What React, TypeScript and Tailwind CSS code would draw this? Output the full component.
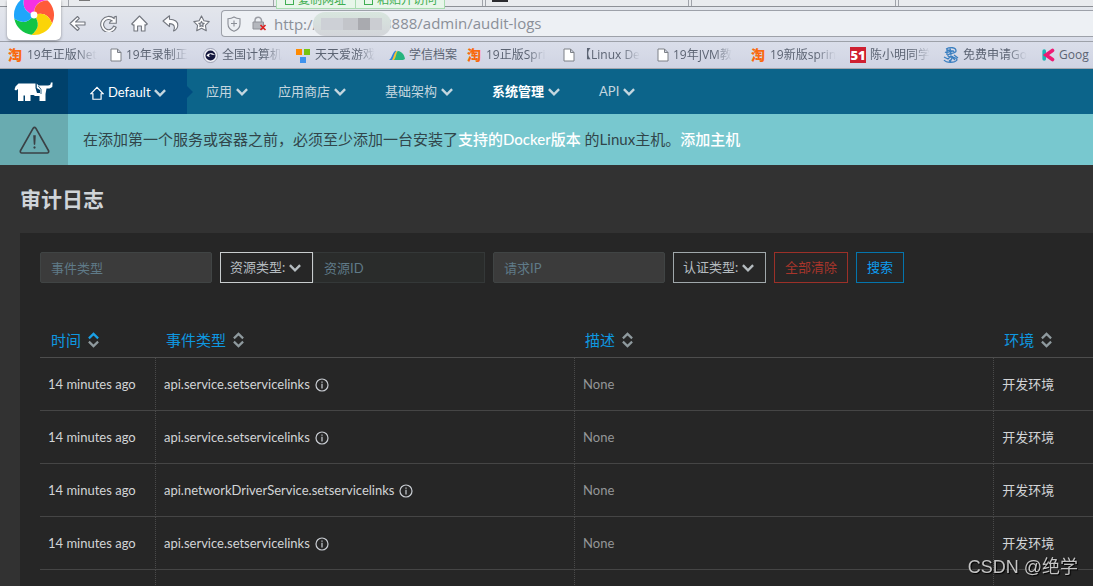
import React from "react";

const ui = "font-['Lato','Noto_Sans_CJK_SC',sans-serif]";
const chrome = "font-['Open_Sans','Noto_Sans_CJK_SC',sans-serif]";

function Chevron({ className = "" }: { className?: string }) {
  return (
    <svg className={"h-[8px] w-[12px] shrink-0 " + className} viewBox="0 0 12 8" fill="none" stroke="currentColor" strokeWidth="2.4" aria-hidden="true">
      <path d="M0.9 1.2 L6 6.3 L11.1 1.2" />
    </svg>
  );
}

function SortIcon({ active = false }: { active?: boolean }) {
  return (
    <svg className="h-[16px] w-[11px] shrink-0" viewBox="0 0 11 16" fill="none" strokeWidth="2.2" aria-hidden="true">
      <path d="M0.9 6.4 L5.5 1.9 L10.1 6.4" stroke={active ? "#1aa0e6" : "#8f9a9e"} />
      <path d="M0.9 9.6 L5.5 14.1 L10.1 9.6" stroke="#8f9a9e" />
    </svg>
  );
}

function InfoIcon() {
  return (
    <svg className="h-[14px] w-[14px] shrink-0" viewBox="0 0 14 14" fill="none" stroke="#c9cdd3" aria-hidden="true">
      <circle cx="7" cy="7" r="6" strokeWidth="1.2" />
      <path d="M7 5.8 V10.6 M7 3.4 V4.8" strokeWidth="1.2" />
    </svg>
  );
}

function Pinwheel() {
  const colors = ["#f531e2", "#ff5b3a", "#fbd408", "#12c445", "#1fa5fb"];
  return (
    <svg className="h-[42px] w-[42px]" viewBox="-21 -21 42 42" aria-hidden="true">
      {colors.map((c, i) => (
        <path key={c} fill={c} transform={`rotate(${i * 72 + 8})`} d="M0 0 Q-14 -2 -12 -16 A20 20 0 0 1 11.5 -16.4 Q-2.4 -13.9 0 0 Z" />
      ))}
      <circle r="3.4" fill="#fff" />
    </svg>
  );
}

const toolPath = { fill: "#fdfdfe", stroke: "#73777f", strokeWidth: 1.1, strokeLinejoin: "round" as const };

const tools = [
  { label: "Back", d: "M1 8.5 L8.5 1.5 L10.3 3.3 L6.6 7 H16 V10 H6.6 L10.3 13.7 L8.5 15.5 Z" },
  { label: "Reload", d: "M14.2 2 L16.3 1.2 V8.2 H9.4 L10.6 6 L12.2 5.9 A5.1 5.1 0 1 0 13.6 11 L16.2 12.2 A8 8 0 1 1 14.2 3.6 Z" },
  { label: "Home", d: "M8.5 1 L16.3 9 L14.6 10.2 L14 9.7 V16 H10.4 V11 H6.6 V16 H3 V9.7 L2.4 10.2 L0.7 9 Z" },
  { label: "Undo", d: "M1 6 L7.5 0.8 V4.2 C13 4.2 16 7 15.8 10.5 C15.6 13 14 15 11.6 16 C13.4 12.6 12.6 8.6 7.5 8.6 V11.6 Z" },
  { label: "Favourite", d: "M8.5 0.9 L10.9 5.8 L16.2 6.6 L12.4 10.4 L13.3 15.8 L8.5 13.3 L3.7 15.8 L4.6 10.4 L0.8 6.6 L6.1 5.8 Z M8.5 6.4 L7.7 8.1 L5.8 8.3 L7.2 9.7 L6.9 11.6 L8.5 10.7 L10.1 11.6 L9.8 9.7 L11.2 8.3 L9.3 8.1 Z" },
];

function Taobao() {
  return <span className="w-[15px] shrink-0 text-[14px] leading-[16px] font-black text-[#f9690e]">淘</span>;
}

function PageIcon() {
  return (
    <svg className="h-[14px] w-[12px] shrink-0" viewBox="0 0 12 14" fill="#fff" stroke="#7c8087" aria-hidden="true">
      <path d="M1 1 H7.5 L11 4.5 V13 H1 Z M7.5 1 V4.5 H11" />
    </svg>
  );
}

function EyeIcon() {
  return (
    <svg className="h-[15px] w-[15px] shrink-0" viewBox="0 0 15 15" fill="none" aria-hidden="true">
      <circle cx="7.5" cy="7.5" r="7" fill="#f2f3f8" stroke="#8b90a5" strokeWidth=".8" />
      <circle cx="7.5" cy="7.5" r="5" fill="#14173d" />
      <path d="M3.5 7.6 C5.5 4.6 10 4.6 12 7.2 C9 6.4 8.3 7 8.2 8.5 C7 9.6 4.8 9 3.5 7.6" fill="#fff" />
      <circle cx="7.6" cy="7.6" r="1.5" fill="#14173d" />
    </svg>
  );
}

function BlocksIcon() {
  return (
    <svg className="h-[15px] w-[15px] shrink-0" viewBox="0 0 15 15" aria-hidden="true">
      <path d="M0 1 H6 V7 H0 Z" fill="#ff8a00" />
      <path d="M8 1 H14 V7 H8 Z" fill="#77c410" />
      <path d="M4 9 H10 V15 H4 Z" fill="#3f93ee" />
    </svg>
  );
}

function ChsiIcon() {
  return (
    <svg className="h-[14px] w-[16px] shrink-0" viewBox="0 0 16 14" aria-hidden="true">
      <path d="M0 12 C3 11 3 4 7 2.500 L6 12 Z" fill="#2f7fe0" />
      <path d="M3 12 C5 9 5 4 8.500 2.500 L8 12 Z" fill="#f4c331" />
      <path d="M5 12 C7.500 9 7 4 9 3 C13 3.500 15.500 7 16 11 L14 12 Z" fill="#26b47e" />
    </svg>
  );
}

function FiftyOne() {
  return <span className="grid h-[16px] w-[16px] shrink-0 place-items-center bg-[#cf2031] text-[13px] leading-none font-extrabold text-white">51</span>;
}

function BlueFigure() {
  return (
    <svg className="h-[16px] w-[16px] shrink-0" viewBox="0 0 16 16" fill="none" stroke="#3a7fc0" strokeWidth="1.3" aria-hidden="true">
      <path d="M3 2 C7 0 13 0 13 4 C13 7 4 6 5 9 C6 11 14 9 14 13 C12 16 3 16 1 13 M2 5 C5 7 10 2 11 5 M1 10 L5 12 L8 9 L12 13 M4 3 L9 4 M6 14 L9 12 M11 8 L15 11 M4 2 L4 8 M7 1 L8 8 M10 9 L7 15" />
    </svg>
  );
}

function PinkK() {
  return (
    <svg className="h-[14px] w-[13px] shrink-0" viewBox="0 0 13 14" fill="none" strokeLinecap="round" strokeWidth="3.6" aria-hidden="true">
      <path d="M2.200 3 V11" stroke="#1fb5b5" />
      <path d="M10.500 2.500 L4 7 L10.500 11.500" stroke="#ee1a74" />
    </svg>
  );
}

const bookmarks = [
  { w: "w-[102px]", fade: true, icon: <Taobao />, label: "19年正版Net" },
  { w: "w-[93px]", fade: true, icon: <PageIcon />, label: "19年录制正" },
  { w: "w-[93px]", fade: true, icon: <EyeIcon />, label: "全国计算机" },
  { w: "w-[93px]", fade: true, icon: <BlocksIcon />, label: "天天爱游戏" },
  { w: "w-[78px]", fade: false, icon: <ChsiIcon />, label: "学信档案" },
  { w: "w-[96px]", fade: true, icon: <Taobao />, label: "19正版Spri" },
  { w: "w-[94px]", fade: true, icon: <PageIcon />, label: "【Linux De" },
  { w: "w-[94px]", fade: true, icon: <PageIcon />, label: "19年JVM教" },
  { w: "w-[99px]", fade: true, icon: <Taobao />, label: "19新版sprin" },
  { w: "w-[93px]", fade: true, icon: <FiftyOne />, label: "陈小明同学" },
  { w: "w-[99px]", fade: true, icon: <BlueFigure />, label: "免费申请Go" },
  { w: "", fade: false, icon: <PinkK />, label: "Goog" },
];

function BrowserChrome() {
  return (
    <header className={"relative border-b border-[#a4a7ae] bg-[#d6dae7] text-[#5c6473] " + chrome}>
      <div className="flex h-[7px] border-b border-[#8d9096] bg-[#e9ebee] pl-[68px]">
        <div className="w-[206px] border-x border-[#a0a3aa] pl-[10px]"><div className="h-px w-[11px] bg-[#777]" /></div>
        <div className="w-[209px] border-r border-[#a0a3aa]" />
        <div className="ml-[2px] w-[204px] border-x border-[#a0a3aa] pl-[6px]"><div className="h-[2px] w-[16px] bg-[#2c2c30]" /></div>
        <div className="ml-[2px] w-[205px] border-x border-[#a0a3aa]" />
        <div className="ml-[2px] flex-1 border-l border-[#a0a3aa]" />
      </div>
      <div className="flex h-[34px] bg-linear-to-b from-[#e3e6ec] to-[#d9dde9] pt-[3px] pb-[4px] pl-[69px]">
        <div className="flex items-center gap-[14px] pr-[11px]">
          {tools.map((t) => (
            <button key={t.label} aria-label={t.label} className="h-[18px] w-[17px]">
              <svg viewBox="0 0 17 17" className="h-[17px] w-[17px]" fillRule="evenodd"><path {...toolPath} d={t.d} /></svg>
            </button>
          ))}
        </div>
        <div className="flex min-w-0 flex-1 items-center rounded-l-[4px] border border-r-0 border-[#9da1a9] bg-[#edf0f4] pl-[5px] text-[15px] text-[#8a8f98]">
          <svg className="h-[16px] w-[14px]" viewBox="0 0 14 16" fill="none" stroke="#8a8e96" strokeWidth="1.1" aria-hidden="true">
            <path d="M7 1 C9 2.300 11 2.700 13 2.700 V8 C13 11.500 10.500 14 7 15.300 C3.500 14 1 11.500 1 8 V2.700 C3 2.700 5 2.300 7 1 Z M7 4.500 V10.500 M4 7.500 H10" />
          </svg>
          <svg className="ml-[11px] h-[15px] w-[15px]" viewBox="0 0 15 15" fill="none" aria-hidden="true">
            <path d="M3 6 V4.500 A3 3 0 0 1 9.500 4.500 V6" stroke="#9a9da4" strokeWidth="1.5" />
            <path d="M1 6 H11.500 V13 H1 Z" fill="#b4b7bd" stroke="#8f9299" />
            <path d="M8.500 9 L13.500 14 M13.500 9 L8.500 14" stroke="#e01f1f" strokeWidth="1.6" />
          </svg>
          <span className="ml-[7px] w-[39px] leading-[20px]">http://</span>
          <div className="z-10 flex h-[24px] w-[78px] shrink-0 items-center overflow-hidden rounded-full bg-linear-to-b from-[#d8e6de] to-[#d3d5da]">
            <div className="ml-[8px] h-[12px] w-[22px] bg-[#cdd0d6]" />
            <div className="h-[12px] w-[15px] bg-[#c3c5ca]" />
            <div className="h-[12px] w-[12px] bg-[#a9aaaf]" />
            <div className="h-[12px] w-[12px] bg-[#cbcdd2]" />
          </div>
          <div className="-ml-[8px] h-[20px] min-w-0 flex-1">
            <input aria-label="Address" className="block h-[20px] w-full bg-transparent outline-none" defaultValue="8888/admin/audit-logs" />
          </div>
        </div>
      </div>
      <nav aria-label="Bookmarks" className="flex h-[27px] items-center overflow-hidden border-t border-[#9da1a9] bg-linear-to-b from-[#dadeea] to-[#d0d4e3] pl-[8px] text-[12px]">
        {bookmarks.map((b) => (
          <a key={b.label} href="#" className={"flex shrink-0 items-center gap-[4px] " + b.w}>
            {b.icon}
            <span className={"shrink-0 leading-[18px] whitespace-nowrap " + (b.fade ? "mask-r-from-70%" : "")}>{b.label}</span>
          </a>
        ))}
      </nav>
      <div className="absolute top-0 left-[7px] flex h-[40px] w-[54px] items-end justify-center overflow-hidden rounded-b-[5px] bg-white pb-[4px] shadow-[0_1px_3px_rgba(0,0,0,0.35)]">
        <Pinwheel />
      </div>
      <div className="absolute top-0 left-[276px] flex h-[9px] w-[169px] items-end overflow-hidden border border-t-0 border-[#a8dcb0] bg-[#e8f6ea] text-[12px] leading-[16px] whitespace-nowrap text-[#3fae52]">
        <button className="flex w-[79px] items-center gap-[4px] border-r border-[#a8dcb0] pl-[8px]">
          <span className="h-[9px] w-[9px] border border-[#3fae52]" />复制网址
        </button>
        <button className="flex items-center gap-[4px] pl-[8px]">
          <span className="h-[9px] w-[9px] border border-[#3fae52]" />粘贴并访问
        </button>
      </div>
    </header>
  );
}

function CowLogo() {
  return (
    <svg className="h-[20px] w-[40px]" viewBox="0 0 40 20" fill="#fff" aria-label="Rancher">
      <path d="M4.500 1.500 H21.500 V6 L23 11 H26 V8 L22.800 6 L22.800 1.500 L24.500 3.500 H34 Q37 3.300 36.800 0.500 L38.600 0.500 L38.300 5 L35.500 6.500 H32.500 L31.500 12 V19 H25.500 V14 H21 L19.500 13 H16.500 V19 H11 V13.500 H9.500 V19 H4 V7 L2 8.500 L0.500 7.500 L1.500 4.500 Z" />
      <path d="M24.300 4 L27 7.200 V12" fill="none" stroke="#00416b" strokeWidth=".8" />
    </svg>
  );
}

const menu = [
  { label: "应用", style: "text-[#c4d6df] mr-[30px]" },
  { label: "应用商店", style: "text-[#c4d6df] mr-[39px]" },
  { label: "基础架构", style: "text-[#c4d6df] mr-[39px]" },
  { label: "系统管理", style: "font-bold text-white mr-[39px]" },
  { label: "API", style: "text-[#c4d6df]" },
];

const field = "h-[31px] border px-[10px] text-[13px] text-[#c9cdd0] outline-none placeholder:text-[#5f7a88]";

function FilterSelect({ label, style }: { label: string; style: string }) {
  return (
    <div className="relative w-[93px] shrink-0 text-[#b5bcc0]">
      <select aria-label={label} className={"h-[31px] w-full appearance-none border bg-transparent pl-[9px] text-[13px] outline-none " + style}>
        <option>{label}</option>
      </select>
      <Chevron className="pointer-events-none absolute top-[12px] right-[12px]" />
    </div>
  );
}

const columns = [
  { label: "时间", w: "w-[115px]", active: true },
  { label: "事件类型", w: "w-[39.8%]" },
  { label: "描述", w: "w-[39.8%]" },
  { label: "环境", w: "" },
];

const rows = [
  "api.service.setservicelinks",
  "api.service.setservicelinks",
  "api.networkDriverService.setservicelinks",
  "api.service.setservicelinks",
];

const cell = "h-[53px] border-b border-b-[#454545] pt-[2px] pl-[8px] whitespace-nowrap";
const dotted = "border-l border-l-[#4a4a4a] [border-left-style:dotted]";

export default function App() {
  return (
    <div className={"flex h-screen flex-col overflow-hidden bg-[#323232] " + ui}>
      <BrowserChrome />

      <nav aria-label="Main" className="flex h-[45px] shrink-0 bg-[#0c648a] text-[13px]">
        <a href="#" className="flex w-[68px] items-center bg-[#00416b] pl-[14px]"><CowLogo /></a>
        <div className="relative flex w-[119px] bg-[#004c80]">
          <button className="flex flex-1 items-center pt-[3px] pl-[22px] text-[14px] text-white">
            <svg className="h-[14px] w-[14px]" viewBox="0 0 13 13" fill="none" stroke="currentColor" strokeWidth="1.1" aria-hidden="true">
              <path d="M2.700 7.200 H0.800 L6.500 1.200 L12.200 7.200 H10.300 V12.300 H2.700 Z" />
            </svg>
            <span className="ml-[4px] text-[13px]">Default</span>
            <Chevron className="ml-[3px] text-[#c4d6df]" />
          </button>
          <svg className="absolute top-[17px] left-full h-[12px] w-[6px]" viewBox="0 0 6 12" fill="#004c80" aria-hidden="true"><path d="M0 0 L6 6 L0 12 Z" /></svg>
        </div>
        <div className="flex items-center pl-[19px]">
          {menu.map((m) => (
            <button key={m.label} className={"flex items-center gap-[4px] whitespace-nowrap " + m.style}>
              {m.label}
              <Chevron className="text-[#c4d6df]" />
            </button>
          ))}
        </div>
      </nav>

      <div role="alert" className="flex h-[51px] shrink-0 bg-[#78c8cf] text-[15px] text-[#31454a]">
        <div className="grid w-[68px] shrink-0 place-items-center bg-[#69abb0]">
          <svg className="h-[28px] w-[31px]" viewBox="0 0 31 28" fill="none" stroke="#3a4145" aria-hidden="true">
            <path d="M14.200 2.200 Q15.500 0.500 16.800 2.200 L29.600 24.800 Q30 26.800 28.200 27 H2.800 Q1 26.800 1.400 24.800 Z" strokeWidth="1.7" />
            <path d="M14.500 9.500 H16.500 L16 18.500 H15 Z" fill="#3a4145" strokeWidth=".5" />
            <circle cx="15.500" cy="21.500" r=".9" fill="#3a4145" strokeWidth=".4" />
          </svg>
        </div>
        <p className="self-center pl-[15px] whitespace-nowrap">
          在添加第一个服务或容器之前，必须至少添加一台安装了<a href="#" className="font-medium text-white">支持的Docker版本</a> 的Linux主机。<a href="#" className="font-medium text-white">添加主机</a>
        </p>
      </div>

      <main className="flex min-h-0 flex-1 flex-col pl-[20px]">
        <h1 className="pt-[20px] pb-[20px] text-[21px] leading-[28px] font-bold text-[#cfd4d8]">审计日志</h1>
        <section className="flex-1 bg-[#262626] pt-[19px] pl-[20px]">
          <form className="flex gap-[8px]" onSubmit={(e) => e.preventDefault()}>
            <input aria-label="事件类型" placeholder="事件类型" className={"w-[172px] rounded-[2px] border-[#404444] bg-[#3b3b3b] " + field} />
            <div className="flex">
              <FilterSelect label="资源类型:" style="border-[#c8cccd]" />
              <input aria-label="资源ID" placeholder="资源ID" className={"w-[172px] border-[#343838] bg-[#2a2c2b] " + field} />
            </div>
            <input aria-label="请求IP" placeholder="请求IP" className={"w-[172px] rounded-[2px] border-[#404444] bg-[#3b3b3b] " + field} />
            <FilterSelect label="认证类型:" style="border-[#a0a8ab]" />
            <button type="button" className="h-[31px] w-[74px] border border-[#9c3028] text-[13px] text-[#a8352b]">全部清除</button>
            <button type="submit" className="h-[31px] w-[48px] border border-[#0475ad] text-[13px] text-[#0c9df0]">搜索</button>
          </form>
          <table className="mt-[40px] w-full table-fixed border-separate border-spacing-0 text-[13px] text-[#d2d4d6]">
            <thead>
              <tr>
                {columns.map((c) => (
                  <th key={c.label} className={"h-[35px] border-b border-[#4d4d4d] pl-[11px] text-left text-[15px] font-normal text-[#0e98e0] " + c.w}>
                    <button className="flex items-center gap-[7px]">{c.label}<SortIcon active={c.active} /></button>
                  </th>
                ))}
              </tr>
            </thead>
            <tbody>
              {rows.map((event, i) => (
                <tr key={i}>
                  <td className={cell}>14 minutes ago</td>
                  <td className={cell + " " + dotted}><span className="flex items-center gap-[5px]">{event}<InfoIcon /></span></td>
                  <td className={cell + " " + dotted + " text-[#949698]"}>None</td>
                  <td className={cell + " " + dotted}>开发环境</td>
                </tr>
              ))}
              <tr aria-hidden="true">
                <td className={cell} />
                <td className={cell + " " + dotted} />
                <td className={cell + " " + dotted} />
                <td className={cell + " " + dotted} />
              </tr>
            </tbody>
          </table>
        </section>
      </main>

      <div className="pointer-events-none fixed right-[15px] bottom-[6px] font-['Liberation_Sans','Noto_Sans_CJK_SC',sans-serif] text-[18px] leading-[26px] text-[#c4c4c4] [text-shadow:1px_1px_1px_#000]">CSDN @绝学</div>
    </div>
  );
}
